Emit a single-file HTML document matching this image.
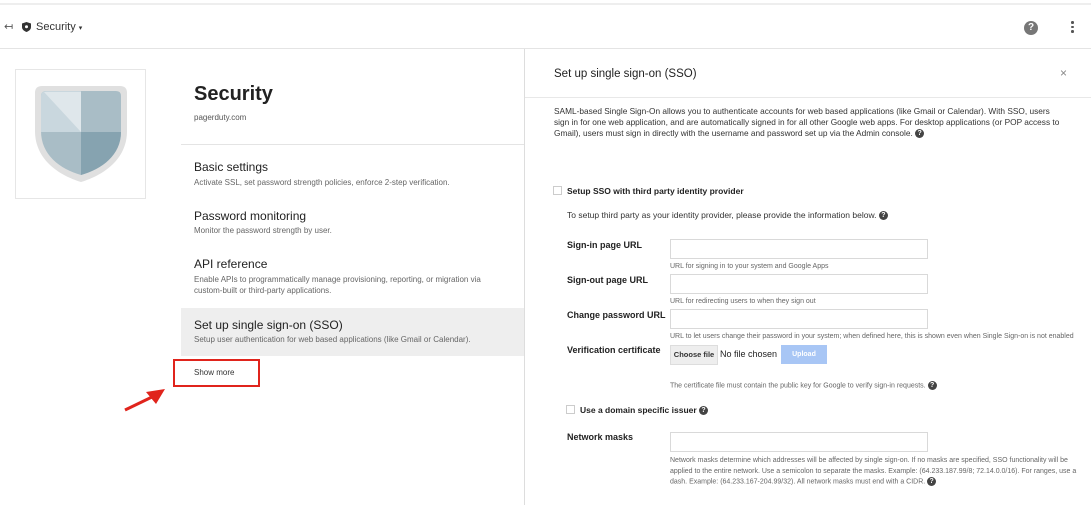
<!DOCTYPE html>
<html><head><meta charset="utf-8"><style>
*{margin:0;padding:0;box-sizing:border-box}
body{width:1091px;height:505px;overflow:hidden;background:#fff;font-family:"Liberation Sans",Arial,sans-serif;color:#222;position:relative}
.a{position:absolute;white-space:nowrap}
.q{display:inline-block;width:9px;height:9px;border-radius:50%;background:#444;color:#fff;font-size:7px;font-weight:bold;text-align:center;line-height:9px;vertical-align:middle}
.inp{position:absolute;left:670px;width:258px;height:20px;border:1px solid #d9d9d9;background:#fff}
.lb{position:absolute;left:567px;font-size:9px;font-weight:bold;color:#222}
.hp{position:absolute;left:670px;font-size:7px;color:#666;white-space:nowrap}
.cb{position:absolute;width:9px;height:9px;border:1px solid #ccc;background:#fff}
</style></head><body>
<div class="a" style="left:0;top:3px;width:1091px;height:2px;background:#eee"></div>
<div class="a" style="left:0;top:48px;width:1091px;height:1px;background:#e4e4e4"></div>
<div class="a" style="left:4px;top:20px;font-size:11px;color:#555">&#8612;</div>
<svg class="a" style="left:22px;top:22px" width="9" height="10" viewBox="0 0 9 10"><path d="M4.5 0L9 1.5V5C9 7.5 7 9 4.5 10 2 9 0 7.5 0 5V1.5Z" fill="#333"/><circle cx="4.5" cy="4.8" r="1.5" fill="#fff"/></svg>
<div class="a" style="left:36px;top:21px;font-size:11px;color:#333">Security <span style="font-size:7px">&#9662;</span></div>
<div class="a" style="left:1024px;top:21px;width:14px;height:14px;border-radius:50%;background:#777;color:#fff;font-size:10px;font-weight:bold;text-align:center;line-height:14px">?</div>
<div class="a" style="left:1071px;top:21px;width:3px;line-height:4px;font-size:0">
<div style="width:2.5px;height:2.5px;background:#555;border-radius:50%;margin-bottom:2px"></div><div style="width:2.5px;height:2.5px;background:#555;border-radius:50%;margin-bottom:2px"></div><div style="width:2.5px;height:2.5px;background:#555;border-radius:50%"></div></div>

<div class="a" style="left:15px;top:69px;width:131px;height:130px;border:1px solid #e6e6e6"></div>
<svg class="a" style="left:34px;top:85px" width="94" height="98" viewBox="0 0 94 98">
<path d="M8 1H86Q93 1 93 8V46C93 74 70 90 47 97 24 90 1 74 1 46V8Q1 1 8 1Z" fill="#e0e0e0"/>
<path d="M12 6H82Q87 6 87 11V46C87 70 68 84 47 90 26 84 7 70 7 46V11Q7 6 12 6Z" fill="#a9bdc6"/>
<path d="M12 6H47V47H7V11Q7 6 12 6Z" fill="#c9d7de"/>
<path d="M10 7H47V47Z" fill="#dfe7eb"/>
<path d="M47 47H87C87 70 68 84 47 90Z" fill="#86a3b0"/>
</svg>
<div class="a" style="left:194px;top:83px;font-size:20px;font-weight:bold;color:#222">Security</div>
<div class="a" style="left:194px;top:113px;font-size:8px;color:#555">pagerduty.com</div>
<div class="a" style="left:181px;top:144px;width:344px;height:1px;background:#e4e4e4"></div>
<div class="a" style="left:194px;top:160px;font-size:12px;color:#222">Basic settings</div>
<div class="a" style="left:194px;top:178px;font-size:8px;color:#666">Activate SSL, set password strength policies, enforce 2-step verification.</div>
<div class="a" style="left:194px;top:209px;font-size:12px;color:#222">Password monitoring</div>
<div class="a" style="left:194px;top:226px;font-size:8px;color:#666">Monitor the password strength by user.</div>
<div class="a" style="left:194px;top:257px;font-size:12px;color:#222">API reference</div>
<div class="a" style="left:194px;top:274px;font-size:8px;color:#666;line-height:11px">Enable APIs to programmatically manage provisioning, reporting, or migration via<br>custom-built or third-party applications.</div>
<div class="a" style="left:181px;top:308px;width:344px;height:48px;background:#eee"></div>
<div class="a" style="left:194px;top:318px;font-size:12px;color:#222">Set up single sign-on (SSO)</div>
<div class="a" style="left:194px;top:335px;font-size:8px;color:#666">Setup user authentication for web based applications (like Gmail or Calendar).</div>
<div class="a" style="left:173px;top:359px;width:87px;height:28px;border:2px solid #e0241c"></div>
<div class="a" style="left:194px;top:368px;font-size:8px;color:#333">Show more</div>
<svg class="a" style="left:122px;top:386px" width="45" height="26" viewBox="0 0 45 26"><path d="M3 24L30 11" stroke="#e0241c" stroke-width="3"/><path d="M43 3L24 6 34 18Z" fill="#e0241c"/></svg>

<div class="a" style="left:524px;top:49px;width:1px;height:456px;background:#ddd"></div>
<div class="a" style="left:554px;top:68px;font-size:11.5px;color:#222">Set up single sign-on (SSO)</div>
<div class="a" style="left:1060px;top:66px;font-size:12px;color:#888">&times;</div>
<div class="a" style="left:525px;top:97px;width:566px;height:1px;background:#e8e8e8"></div>
<div class="a" style="left:554px;top:106px;font-size:8.3px;color:#333;line-height:11px">SAML-based Single Sign-On allows you to authenticate accounts for web based applications (like Gmail or Calendar). With SSO, users<br>sign in for one web application, and are automatically signed in for all other Google web apps. For desktop applications (or POP access to<br>Gmail), users must sign in directly with the username and password set up via the Admin console. <span class="q">?</span></div>
<div class="cb" style="left:553px;top:186px"></div>
<div class="a" style="left:567px;top:186px;font-size:8.5px;font-weight:bold">Setup SSO with third party identity provider</div>
<div class="a" style="left:567px;top:210px;font-size:8.5px;color:#333">To setup third party as your identity provider, please provide the information below. <span class="q">?</span></div>
<div class="lb" style="top:240px">Sign-in page URL</div>
<div class="inp" style="top:239px"></div>
<div class="hp" style="top:263px">URL for signing in to your system and Google Apps</div>
<div class="lb" style="top:275px">Sign-out page URL</div>
<div class="inp" style="top:274px"></div>
<div class="hp" style="top:298px">URL for redirecting users to when they sign out</div>
<div class="lb" style="top:310px">Change password URL</div>
<div class="inp" style="top:309px"></div>
<div class="hp" style="top:333px">URL to let users change their password in your system; when defined here, this is shown even when Single Sign-on is not enabled</div>
<div class="lb" style="top:345px">Verification certificate</div>
<div class="a" style="left:670px;top:345px;width:48px;height:20px;background:#eee;border:1px solid #ddd;font-size:7.5px;font-weight:bold;color:#333;text-align:center;line-height:18px">Choose file</div>
<div class="a" style="left:720px;top:349px;font-size:9px;color:#222">No file chosen</div>
<div class="a" style="left:781px;top:345px;width:46px;height:19px;background:#a8c6f5;color:#fff;font-size:7px;font-weight:bold;text-align:center;line-height:19px">Upload</div>
<div class="hp" style="top:381px">The certificate file must contain the public key for Google to verify sign-in requests. <span class="q">?</span></div>
<div class="cb" style="left:566px;top:405px"></div>
<div class="a" style="left:580px;top:405px;font-size:8.5px;font-weight:bold">Use a domain specific issuer <span class="q">?</span></div>
<div class="lb" style="top:432px">Network masks</div>
<div class="inp" style="top:432px"></div>
<div class="hp" style="top:456px;line-height:10.5px">Network masks determine which addresses will be affected by single sign-on. If no masks are specified, SSO functionality will be<br>applied to the entire network. Use a semicolon to separate the masks. Example: (64.233.187.99/8; 72.14.0.0/16). For ranges, use a<br>dash. Example: (64.233.167-204.99/32). All network masks must end with a CIDR. <span class="q">?</span></div>
</body></html>
